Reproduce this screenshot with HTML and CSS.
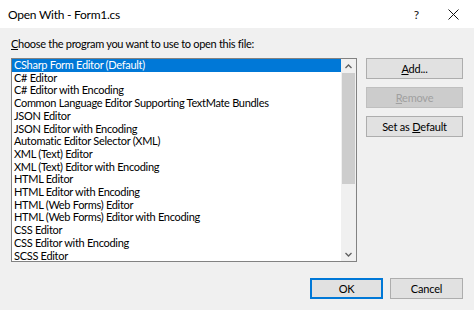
FILE: index.html
```html
<!DOCTYPE html>
<html>
  <head>
    <title>Open With - Form1.cs</title>
    <link rel="stylesheet" href="styles.css">
  </head>
  <body>
    <div class="dialog">
      <div class="titlebar">
        <span class="title">Open With - Form1.cs</span>
        <span class="caption-btn help">?</span>
        <span class="caption-btn close">
          <svg width="11" height="11" viewBox="0 0 11 11"><path d="M0.5 0.5 L10.5 10.5 M10.5 0.5 L0.5 10.5" stroke="#111" stroke-width="1"/></svg>
        </span>
      </div>
      <div class="content">
        <label class="prompt"><u>C</u>hoose the program you want to use to open this file:</label>
        <div class="main-row">
          <div class="listbox">
            <ul class="items">
              <li class="selected">CSharp Form Editor (Default)</li>
              <li>C# Editor</li>
              <li>C# Editor with Encoding</li>
              <li>Common Language Editor Supporting TextMate Bundles</li>
              <li>JSON Editor</li>
              <li>JSON Editor with Encoding</li>
              <li>Automatic Editor Selector (XML)</li>
              <li>XML (Text) Editor</li>
              <li>XML (Text) Editor with Encoding</li>
              <li>HTML Editor</li>
              <li>HTML Editor with Encoding</li>
              <li>HTML (Web Forms) Editor</li>
              <li>HTML (Web Forms) Editor with Encoding</li>
              <li>CSS Editor</li>
              <li>CSS Editor with Encoding</li>
              <li>SCSS Editor</li>
            </ul>
            <div class="scrollbar">
              <div class="arrow">
                <svg width="7" height="5" viewBox="0 0 7 5"><polyline points="0.5,4 3.5,1 6.5,4" fill="none" stroke="#606060" stroke-width="1.3"/></svg>
              </div>
              <div class="track">
                <div class="thumb"></div>
              </div>
              <div class="arrow">
                <svg width="7" height="5" viewBox="0 0 7 5"><polyline points="0.5,1 3.5,4 6.5,1" fill="none" stroke="#606060" stroke-width="1.3"/></svg>
              </div>
            </div>
          </div>
          <div class="side-buttons">
            <button class="btn"><u>A</u>dd...</button>
            <button class="btn" disabled><u>R</u>emove</button>
            <button class="btn">Set as <u>D</u>efault</button>
          </div>
        </div>
        <div class="footer">
          <button class="btn btn-small default">OK</button>
          <button class="btn btn-small">Cancel</button>
        </div>
      </div>
    </div>
  </body>
</html>
```

FILE: styles.css
```css
body {
  margin: 0;
  font-family: Lato, "Noto Sans", sans-serif;
  color: #000;
}
.dialog {
  width: 474px;
  height: 310px;
  display: flex;
  flex-direction: column;
  background: #f0f0f0;
}
.titlebar {
  height: 28px;
  background: #fff;
  display: flex;
  align-items: center;
  padding-left: 8px;
}
.title {
  flex: 1;
  font-size: 12px;
  letter-spacing: -0.25px;
}
.caption-btn {
  width: 37px;
  text-align: center;
  font-size: 12px;
  color: #111;
}
.close {
  display: flex;
  justify-content: center;
  margin-right: 2px;
}
.content {
  flex: 1;
  padding: 8px 11px 0 11px;
  display: flex;
  flex-direction: column;
}
.prompt {
  font-size: 11px;
  line-height: 15px;
  letter-spacing: -0.3px;
}
.main-row {
  display: flex;
  gap: 9px;
  margin-top: 7px;
}
.listbox {
  width: 346px;
  height: 204px;
  box-sizing: border-box;
  border: 1px solid #828282;
  background: #fff;
  display: flex;
}
.items {
  flex: 1;
  list-style: none;
  margin: 0;
  padding: 0;
  font-size: 11px;
  line-height: 12.7px;
  letter-spacing: -0.3px;
}
.items li {
  padding-left: 2px;
  white-space: nowrap;
}
.items .selected {
  background: #0078d7;
  color: #fff;
}
.scrollbar {
  width: 15px;
  background: #f0f0f0;
  display: flex;
  flex-direction: column;
}
.arrow {
  height: 14px;
  display: flex;
  align-items: center;
  justify-content: center;
}
.track {
  flex: 1;
}
.thumb {
  margin: 0 1px;
  height: 111px;
  background: #cdcdcd;
}
.side-buttons {
  display: flex;
  flex-direction: column;
  gap: 8px;
}
.btn {
  width: 97px;
  height: 21px;
  box-sizing: border-box;
  border: 1px solid #adadad;
  background: #e1e1e1;
  font-family: inherit;
  font-size: 11px;
  letter-spacing: -0.2px;
  color: #000;
  padding: 0;
}
.btn:disabled {
  background: #cccccc;
  border-color: #bfbfbf;
  color: #a0a0a0;
}
.footer {
  display: flex;
  justify-content: flex-end;
  gap: 7px;
  margin-top: 16px;
}
.btn-small {
  width: 73px;
}
.default {
  border: 2px solid #0078d7;
}
```
